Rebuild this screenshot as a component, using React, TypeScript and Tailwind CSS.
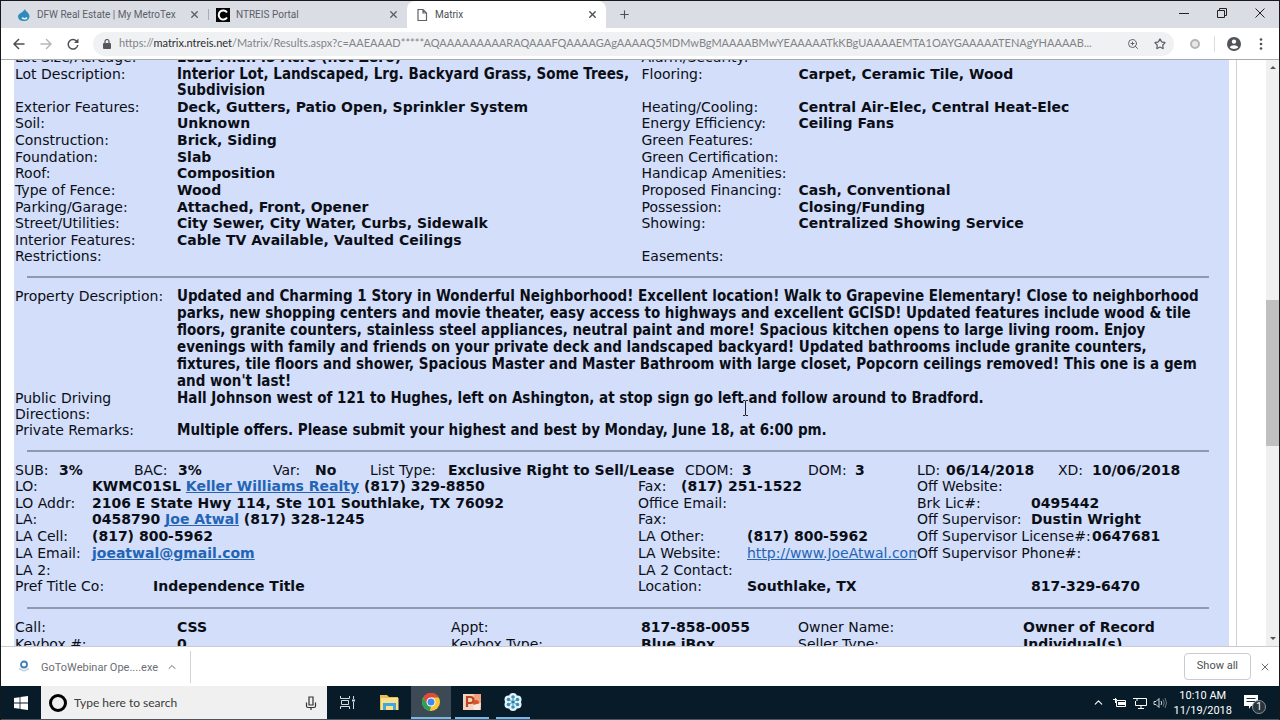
import type { ReactNode } from "react";
import { ChevronUp, Plus, Star, X, ZoomIn } from "lucide-react";

type Row = { label: string; value?: ReactNode; tall?: boolean; labelWidth?: string };

// long lines are set in the condensed cut, so they stay inside the sheet
const longText = "font-['DejaVu_Sans_Condensed','DejaVu_Sans',sans-serif] text-[15px] font-bold";
const link = "text-[#2464b4] underline";

const featuresLeft: Row[] = [
  { label: "Lot Size/Acreage:", value: "Less Than .5 Acre (not Zero)" },
  {
    label: "Lot Description:",
    value: (
      <span className={longText}>
        Interior Lot, Landscaped, Lrg. Backyard Grass, Some Trees,
        <br />
        Subdivision
      </span>
    ),
    tall: true,
  },
  { label: "Exterior Features:", value: "Deck, Gutters, Patio Open, Sprinkler System" },
  { label: "Soil:", value: "Unknown" },
  { label: "Construction:", value: "Brick, Siding" },
  { label: "Foundation:", value: "Slab" },
  { label: "Roof:", value: "Composition" },
  { label: "Type of Fence:", value: "Wood" },
  { label: "Parking/Garage:", value: "Attached, Front, Opener" },
  { label: "Street/Utilities:", value: "City Sewer, City Water, Curbs, Sidewalk" },
  { label: "Interior Features:", value: "Cable TV Available, Vaulted Ceilings" },
  { label: "Restrictions:" },
];

const featuresRight: Row[] = [
  { label: "Alarm/Security:" },
  { label: "Flooring:", value: "Carpet, Ceramic Tile, Wood", tall: true },
  { label: "Heating/Cooling:", value: "Central Air-Elec, Central Heat-Elec" },
  { label: "Energy Efficiency:", value: "Ceiling Fans" },
  { label: "Green Features:" },
  { label: "Green Certification:" },
  { label: "Handicap Amenities:" },
  { label: "Proposed Financing:", value: "Cash, Conventional" },
  { label: "Possession:", value: "Closing/Funding" },
  { label: "Showing:", value: "Centralized Showing Service" },
  { label: "" },
  { label: "Easements:" },
];

const description = [
  "Updated and Charming 1 Story in Wonderful Neighborhood! Excellent location! Walk to Grapevine Elementary! Close to neighborhood",
  "parks, new shopping centers and movie theater, easy access to highways and excellent GCISD! Updated features include wood & tile",
  "floors, granite counters, stainless steel appliances, neutral paint and more! Spacious kitchen opens to large living room. Enjoy",
  "evenings with family and friends on your private deck and landscaped backyard! Updated bathrooms include granite counters,",
  "fixtures, tile floors and shower, Spacious Master and Master Bathroom with large closet, Popcorn ceilings removed! This one is a gem",
  "and won't last!",
];

const agentLeft: Row[] = [
  {
    label: "LO:",
    value: (
      <>
        KWMC01SL <a href="#" className={link}>Keller Williams Realty</a> (817) 329-8850
      </>
    ),
  },
  { label: "LO Addr:", value: "2106 E State Hwy 114, Ste 101 Southlake, TX 76092" },
  {
    label: "LA:",
    value: (
      <>
        0458790 <a href="#" className={link}>Joe Atwal</a> (817) 328-1245
      </>
    ),
  },
  { label: "LA Cell:", value: "(817) 800-5962" },
  { label: "LA Email:", value: <a href="#" className={link}>joeatwal@gmail.com</a> },
  { label: "LA 2:" },
  { label: "Pref Title Co:", value: "Independence Title", labelWidth: "w-[138px]" },
];

const agentMiddle: Row[] = [
  { label: "Fax:", value: "(817) 251-1522", labelWidth: "w-[43px]" },
  { label: "Office Email:" },
  { label: "Fax:" },
  { label: "LA Other:", value: "(817) 800-5962" },
  {
    label: "LA Website:",
    value: <a href="#" className="font-normal text-[#2464b4] underline">http://www.JoeAtwal.com</a>,
  },
  { label: "LA 2 Contact:" },
  { label: "Location:", value: "Southlake, TX" },
];

const agentRight: Row[] = [
  { label: "Off Website:" },
  { label: "Brk Lic#:", value: "0495442" },
  { label: "Off Supervisor:", value: "Dustin Wright" },
  { label: "Off Supervisor License#:", value: "0647681", labelWidth: "w-[175px]" },
  { label: "Off Supervisor Phone#:", labelWidth: "w-[175px]" },
  { label: "" },
  { label: "", value: "817-329-6470" },
];

const terms = [
  ["SUB:", "3%"],
  ["BAC:", "3%"],
  ["Var:", "No"],
  ["List Type:", "Exclusive Right to Sell/Lease"],
  ["CDOM:", "3"],
  ["DOM:", "3"],
  ["LD:", "06/14/2018"],
  ["XD:", "10/06/2018"],
];

const showing = [
  ["Call:", "CSS", "Appt:", "817-858-0055", "Owner Name:", "Owner of Record"],
  ["Keybox #:", "0", "Keybox Type:", "Blue iBox", "Seller Type:", "Individual(s)"],
];

function Fields({ rows, labelWidth, clip }: { rows: Row[]; labelWidth: string; clip?: boolean }) {
  return (
    <dl className={`grid min-w-0 auto-rows-fr whitespace-nowrap ${clip ? "overflow-hidden" : ""}`}>
      {rows.map((row, i) => (
        <div key={i} className={`flex ${row.tall ? "row-span-2" : ""}`}>
          <dt className={`shrink-0 ${row.labelWidth ?? labelWidth}`}>{row.label}</dt>
          <dd className="font-bold">{row.value}</dd>
        </div>
      ))}
    </dl>
  );
}

function Rule() {
  return <hr className="mr-5 ml-3 border-t-2 border-[#8f99ad]" />;
}

function Tab({ icon, title, active }: { icon: ReactNode; title: string; active?: boolean }) {
  return (
    <div
      className={`flex w-[199px] items-center gap-[6px] px-2 ${
        active ? "rounded-t-lg bg-white text-[#4c4f54]" : ""
      }`}
    >
      {icon}
      <span className="flex-1 whitespace-nowrap">{title}</span>
      <button type="button" aria-label={`Close ${title}`}>
        <X size={11} strokeWidth={3} />
      </button>
    </div>
  );
}

function TabStrip() {
  return (
    <div className="flex h-[27px] shrink-0 bg-[#dadde4] pl-2 font-[Roboto,sans-serif] text-[10px] text-[#5c6067]">
      <Tab
        title="DFW Real Estate | My MetroTex"
        icon={
          <svg width="14" height="14" viewBox="0 0 14 14" className="shrink-0">
            <path d="M8 1C8 3 12.5 4.500 12.500 8.500A5 5 0 0 1 7 13A5 5 0 0 1 1 8.500C1 5 6 5 8 1Z" fill="#2f8cba" />
            <path d="M4.500 10C5.500 8.200 7 10 8 10C9 10 9.500 8.500 10.500 10C9.500 12 5.500 12 4.500 10Z" fill="#e8f1f7" />
          </svg>
        }
      />
      <span className="my-2 -mr-px w-px bg-[#a9adb4]" />
      <Tab
        title="NTREIS Portal"
        icon={
          <svg width="14" height="14" viewBox="0 0 14 14" className="shrink-0">
            <rect width="14" height="14" fill="#050505" />
            <path d="M11 4.500A4.500 4.500 0 1 0 11 9.500" fill="none" stroke="#fff" strokeWidth="2" />
          </svg>
        }
      />
      <Tab
        active
        title="Matrix"
        icon={
          <svg width="14" height="14" viewBox="0 0 14 14" fill="none" stroke="#5f6368" strokeWidth="1.200" className="shrink-0">
            <path d="M3 1.500H8L11.500 5V12.500H3ZM8 1.500V5H11.500" />
          </svg>
        }
      />
      <button type="button" aria-label="New tab" className="ml-3 text-[#4c4f54]">
        <Plus size={13} />
      </button>
      <div className="mr-[14px] ml-auto flex items-center gap-7 pb-1 text-[#222]">
        <button type="button" aria-label="Minimize">
          <svg width="10" height="10" stroke="currentColor"><path d="M0 5.500H10" /></svg>
        </button>
        <button type="button" aria-label="Restore">
          <svg width="10" height="10" fill="none" stroke="currentColor">
            <path d="M.5 2.500H7.500V9.500H.5ZM2.500 2.500V.5H9.500V7.500H7.500" />
          </svg>
        </button>
        <button type="button" aria-label="Close">
          <svg width="10" height="10" stroke="currentColor"><path d="M.5 .5L9.500 9.500M9.500 .5L.5 9.500" /></svg>
        </button>
      </div>
    </div>
  );
}

function Toolbar() {
  return (
    <div className="flex h-8 shrink-0 items-center border-b border-[#a9abb0] bg-white pr-2 pl-3 text-[#5f6368]">
      <div className="flex items-center gap-[15px]">
        <button type="button" aria-label="Back">
          <svg width="12" height="12" fill="none" stroke="#4c4f54" strokeWidth="1.500"><path d="M11.500 6H1.500M6 1L1 6L6 11" /></svg>
        </button>
        <button type="button" aria-label="Forward">
          <svg width="12" height="12" fill="none" stroke="#b6b8bb" strokeWidth="1.500"><path d="M.5 6H10.500M6 1L11 6L6 11" /></svg>
        </button>
        <button type="button" aria-label="Reload">
          <svg width="12" height="12" fill="none" stroke="#4c4f54" strokeWidth="1.500">
            <path d="M10 3.500A4.800 4.800 0 1 0 10.800 7" />
            <path d="M11.500 .5V5H7Z" fill="#4c4f54" stroke="none" />
          </svg>
        </button>
      </div>
      <div className="ml-[14px] flex h-6 min-w-0 flex-1 items-center rounded-full bg-[#f0f1f3] pr-2 pl-[10px]">
        <svg width="8" height="10" viewBox="0 0 8 10" className="shrink-0">
          <rect y="4" width="8" height="6" rx="1" fill="#55585d" />
          <path d="M2 4V2.500A2 2 0 0 1 6 2.500V4" fill="none" stroke="#55585d" strokeWidth="1.200" />
        </svg>
        <p className="ml-2 min-w-0 flex-1 whitespace-nowrap text-[11px] text-[#808388]">
          https://<span className="text-[#2b2d30]">matrix.ntreis.net</span>
          /Matrix/Results.aspx?c=AAEAAAD*****AQAAAAAAAAARAQAAAFQAAAAGAgAAAAQ5MDMwBgMAAAABMwYEAAAAATkKBgUAAAAEMTA1OAYGAAAAATENAgYHAAAAB...
        </p>
        <button type="button" aria-label="Zoom" className="ml-4"><ZoomIn size={12} /></button>
        <button type="button" aria-label="Bookmark" className="ml-[15px]"><Star size={12} strokeWidth={2.5} /></button>
      </div>
      <span className="ml-4 size-[10px] rounded-full border-2 border-[#b4b4b4] bg-[#e8e8e8]" />
      <span className="ml-[14px] h-4 w-px bg-[#dcdde0]" />
      <button type="button" aria-label="Profile" className="ml-3">
        <svg width="14" height="14" viewBox="0 0 14 14">
          <circle cx="7" cy="7" r="7" fill="#505357" />
          <circle cx="7" cy="4.600" r="2.200" fill="#fff" />
          <path d="M2.700 10.200C4 7.500 10 7.500 11.300 10.200C9.500 12.500 4.500 12.500 2.700 10.200Z" fill="#fff" />
        </svg>
      </button>
      <button type="button" aria-label="Menu" className="mr-1 ml-[14px]">
        <svg width="12" height="12" fill="#4c4f54">
          <circle cx="6" cy="1.500" r="1.300" /><circle cx="6" cy="6" r="1.300" /><circle cx="6" cy="10.500" r="1.300" />
        </svg>
      </button>
    </div>
  );
}

function Listing() {
  return (
    <article className="min-w-0 flex-1 self-start bg-[#d2defa] pb-6 pl-px text-[14px] leading-[16px] text-[#0c0e16]">
      <div className="-mt-[11px] grid min-h-[216px] grid-cols-[627fr_588fr]">
        <Fields rows={featuresLeft} labelWidth="w-[162px]" />
        <Fields rows={featuresRight} labelWidth="w-[157px]" />
      </div>

      <div className="pt-[11px] pb-[10px]"><Rule /></div>

      <dl className="grid grid-cols-[162px_minmax(0,1fr)]">
        <dt className="leading-[17px]">Property Description:</dt>
        <dd className={`whitespace-nowrap ${longText}`}>
          {description.map((line) => (
            <p key={line} className="leading-[17px]">{line}</p>
          ))}
        </dd>
        <dt className="w-[120px]">Public Driving Directions:</dt>
        <dd className={longText}>
          Hall Johnson west of 121 to Hughes, left on Ashington, at stop sign go left and follow around to Bradford.
        </dd>
        <dt>Private Remarks:</dt>
        <dd className={longText}>
          Multiple offers. Please submit your highest and best by Monday, June 18, at 6:00 pm.
        </dd>
      </dl>

      <div className="pt-3 pb-[10px]"><Rule /></div>

      <dl className="grid grid-cols-[44fr_75fr_44fr_95fr_42fr_55fr_78fr_237fr_57fr_66fr_47fr_62fr_29fr_112fr_34fr_137fr] whitespace-nowrap">
        {terms.map(([label, value]) => (
          <div key={label} className="contents">
            <dt className="min-w-0">{label}</dt>
            <dd className="min-w-0 font-bold">{value}</dd>
          </div>
        ))}
      </dl>
      <div className="grid min-h-[117px] grid-cols-[623fr_279fr_312fr]">
        <Fields rows={agentLeft} labelWidth="w-[77px]" />
        <Fields rows={agentMiddle} labelWidth="w-[109px]" clip />
        <Fields rows={agentRight} labelWidth="w-[114px]" />
      </div>

      <div className="pt-3 pb-[10px]"><Rule /></div>

      <dl className="grid grid-cols-[162fr_274fr_190fr_157fr_225fr_206fr] leading-[17px] whitespace-nowrap">
        {showing.flat().map((text, i) =>
          i % 2 === 0 ? (
            <dt key={i} className="min-w-0">{text}</dt>
          ) : (
            <dd key={i} className="min-w-0 font-bold">{text}</dd>
          ),
        )}
      </dl>
    </article>
  );
}

function ScrollBar() {
  return (
    <div className="flex w-[13px] flex-col items-center bg-[#f0f0f0]">
      <svg width="12" height="14"><path d="M3 9L6 6L9 9Z" fill="#555" /></svg>
      <div className="w-full flex-[226]" />
      <div className="w-full flex-[146] bg-[#c0c0c0]" />
      <div className="w-full flex-[186]" />
      <svg width="12" height="14"><path d="M3 5L6 8L9 5Z" fill="#555" /></svg>
    </div>
  );
}

function Downloads() {
  return (
    <div className="flex h-10 shrink-0 items-center border-t border-[#c9cbd0] bg-white pr-2 font-[Roboto,sans-serif] text-[11px] text-[#6a6e75]">
      <button type="button" className="flex h-8 items-center border-r border-[#d0d2d6] pr-3 pl-4">
        <svg width="14" height="14" viewBox="0 0 14 14" fill="none">
          <circle cx="7" cy="4.500" r="3" stroke="#3f7fb5" strokeWidth="1.800" />
          <path d="M2 8.500L7 11L12 8.500" stroke="#c4d3df" strokeWidth="1.500" />
        </svg>
        <span className="mr-2 ml-[10px] pt-1">GoToWebinar Ope....exe</span>
        <ChevronUp size={12} />
      </button>
      <button type="button" className="ml-auto h-[27px] rounded border border-[#c9cbd0] px-3 text-[#4c4f54]">
        Show all
      </button>
      <button type="button" aria-label="Close downloads" className="ml-2"><X size={12} /></button>
    </div>
  );
}

function Taskbar() {
  return (
    <div className="flex h-[34px] shrink-0 items-stretch border-b border-[#4a555e] bg-[#081b29] text-white">
      <button type="button" aria-label="Start" className="flex w-10 items-center justify-center">
        <svg width="14" height="14" viewBox="0 0 14 14" fill="#fff">
          <path d="M0 2L5.600 1.200V6.600H0ZM6.400 1.100L14 0V6.600H6.400ZM0 7.400H5.600V12.800L0 12ZM6.400 7.400H14V14L6.400 12.900Z" />
        </svg>
      </button>
      <label className="flex w-[286px] items-center bg-[#f0f0f0] pr-[10px] pl-2">
        <span className="size-[18px] rounded-full border-[3px] border-black" />
        <input
          aria-label="Search"
          placeholder="Type here to search"
          className="ml-[7px] min-w-0 flex-1 bg-transparent text-[12px] placeholder:text-[#3b3b3b]"
        />
        <svg width="12" height="14" viewBox="0 0 12 14" fill="none" stroke="#333" strokeWidth="1.200">
          <path d="M4 1H8V9H4ZM1.500 6.500V10Q1.500 11.500 3 11.500H9Q10.500 11.500 10.500 10V6.500M6 11.500V14" />
        </svg>
      </label>
      <button type="button" aria-label="Task view" className="flex w-10 items-center justify-center">
        <svg width="15" height="13" fill="none" stroke="#d5dbe0">
          <path d="M.5 0V2.500H9.500V0M.5 13V10.500H9.500V13M1.500 4.500H8.500V8.500H1.500ZM13.500 0V3M13.500 6V13" />
          <path d="M12 4.500H15" strokeWidth="2" />
        </svg>
      </button>
      <button type="button" aria-label="File Explorer" className="flex w-11 items-center justify-center">
        <svg width="19" height="17" viewBox="0 0 19 17">
          <path d="M0 1H7L9 3H18V16H0Z" fill="#e8bf55" />
          <path d="M1 4H18.500V16H1Z" fill="#fbe08d" />
          <path d="M3 16V9H16V16H13V12H6V16Z" fill="#3fa8dc" />
        </svg>
      </button>
      <button
        type="button"
        aria-label="Google Chrome"
        className="flex w-10 items-center justify-center border-b-2 border-[#76b9ed] bg-[#3c4a55]"
      >
        <svg width="18" height="18" viewBox="0 0 18 18">
          <circle cx="9" cy="9" r="9" fill="#f7c934" />
          <path d="M9 9L4.900 11.500L1.200 4.500A9 9 0 0 1 16.800 4.500H9Z" fill="#df4a3c" />
          <path d="M1.200 4.500L5.200 11.300L9 13.200L7.800 17.900A9 9 0 0 1 1.200 4.500Z" fill="#2f9e58" />
          <circle cx="9" cy="9" r="4.500" fill="#fff" />
          <circle cx="9" cy="9" r="3.500" fill="#4387ee" />
        </svg>
      </button>
      <button
        type="button"
        aria-label="PowerPoint"
        className="ml-1 flex w-[34px] items-center justify-center border-b-2 border-[#76b9ed]"
      >
        <svg width="19" height="18" viewBox="0 0 19 18">
          <path d="M0 1H18V17H0Z" fill="#f2a37f" />
          <path d="M0 1H11V17H0Z" fill="#f6d3c0" />
          <path d="M4 14V4H7.500A2.800 2.800 0 0 1 7.500 10H4" fill="none" stroke="#b8481f" strokeWidth="2.200" />
          <circle cx="13" cy="10" r="3" fill="#d9532c" />
          <path d="M10 12L18 10L17 17H11Z" fill="#fbe9df" />
        </svg>
      </button>
      <button
        type="button"
        aria-label="GoToWebinar"
        className="ml-[7px] flex w-[34px] items-center justify-center border-b-2 border-[#76b9ed]"
      >
        <svg width="18" height="18" viewBox="0 0 18 18">
          <g fill="#e4f3fa">
            <circle cx="9" cy="4" r="4" /><circle cx="9" cy="14" r="4" />
            <circle cx="4.500" cy="6.500" r="4" /><circle cx="13.500" cy="6.500" r="4" />
            <circle cx="4.500" cy="11.500" r="4" /><circle cx="13.500" cy="11.500" r="4" />
          </g>
          <g fill="#3591b8">
            <circle cx="9" cy="4" r="1.800" /><circle cx="9" cy="14" r="1.800" />
            <circle cx="4.500" cy="6.500" r="1.800" /><circle cx="13.500" cy="6.500" r="1.800" />
            <circle cx="4.500" cy="11.500" r="1.800" /><circle cx="13.500" cy="11.500" r="1.800" />
          </g>
          <path d="M9 6V12M6.400 7.500L11.600 10.500M11.600 7.500L6.400 10.500" stroke="#2b7fa6" />
        </svg>
      </button>
      <div className="ml-auto flex items-center font-[Roboto,sans-serif] text-[11px] leading-[15px]">
        <ChevronUp size={13} />
        <svg width="14" height="12" className="ml-2" fill="none" stroke="#fff">
          <path d="M3.500 3.500H12.500V9.500H3.500Z" />
          <path d="M5 5H12V8H5Z" fill="#fff" stroke="none" />
          <path d="M0 2.500H4M2.500 1V6" />
        </svg>
        <svg width="14" height="12" className="ml-[6px]" fill="none" stroke="#fff">
          <path d="M3 1.500H13.500V8.500H2.500V4M5 11.500H11M8 8.500V11.500M0 1.500H4V4" />
        </svg>
        <svg width="14" height="12" className="ml-[6px]" fill="none" stroke="#cfd6db">
          <path d="M1 4.500H3L6 1.500V10.500L3 7.500H1ZM8 4Q9.500 6 8 8" />
          <path d="M10 2.500Q12.500 6 10 9.500M12 1Q15 6 12 11" stroke="#6c7a85" />
        </svg>
        <div className="ml-[6px] text-center">
          <p>10:10 AM</p>
          <p>11/19/2018</p>
        </div>
        <button type="button" aria-label="Notifications" className="relative mr-[13px] ml-3">
          <svg width="22" height="22" viewBox="0 0 22 22">
            <path d="M0 3H14V14H7L5 17V14H0Z" fill="#fff" />
            <path d="M2.500 6.500H11.500M2.500 9.500H11.500" stroke="#1a2c3a" />
          </svg>
          <span className="absolute right-0 bottom-0 flex size-[14px] items-center justify-center rounded-full border border-[#8b959d] bg-[#29333b] text-[10px] leading-none">
            1
          </span>
        </button>
      </div>
    </div>
  );
}

export default function App() {
  return (
    <div className="flex h-screen flex-col border-x border-t border-[#17181c] bg-white font-[Lato,'Open_Sans',sans-serif]">
      <TabStrip />
      <Toolbar />
      <main className="relative flex min-h-0 flex-1 overflow-hidden bg-white pl-[13px] font-['DejaVu_Sans',Verdana,sans-serif]">
        <Listing />
        <div className="ml-[7px] w-[30px] border-l border-[#cfd1d6]" />
        <ScrollBar />
        {/* text cursor */}
        <svg width="7" height="16" className="absolute top-[340px] left-[58%]" fill="none" stroke="#222">
          <path d="M1 .5H3L3.500 1L4 .5H6M3.500 1V15M1 15.500H3L3.500 15L4 15.500H6" />
        </svg>
      </main>
      <Downloads />
      <Taskbar />
    </div>
  );
}
